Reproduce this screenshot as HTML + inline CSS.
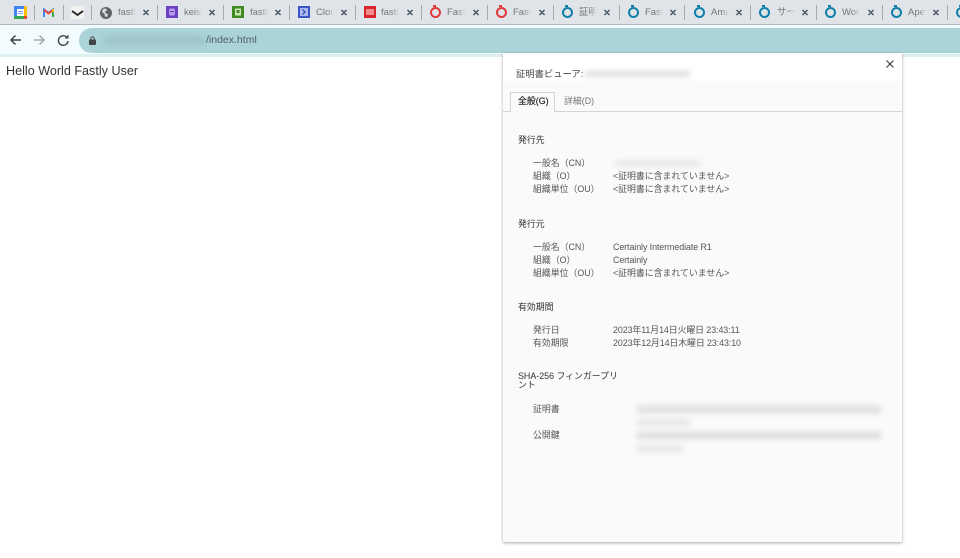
<!DOCTYPE html>
<html lang="ja"><head><meta charset="utf-8"><title>Certificate</title>
<style>
*{box-sizing:border-box}
html,body{margin:0;padding:0;width:960px;height:558px;overflow:hidden;background:#fff}
body{font-family:"Liberation Sans","Noto Sans CJK JP",sans-serif;color:#333}
#w{position:absolute;left:0;top:0;width:960px;height:558px;overflow:hidden;filter:blur(.3px)}
.a{position:absolute;white-space:nowrap}
#strip{left:0;top:0;width:960px;height:24px;background:#e0e4e9}
#stripline{left:0;top:24px;width:960px;height:1px;background:#b4b8bc}
#bar{left:0;top:25px;width:960px;height:29px;background:#f2fbfd}
#barline{left:0;top:54px;width:960px;height:3px;background:#deeff1}
#omni{left:79px;top:28px;width:900px;height:25px;border-radius:13px;background:#aad4d8}
.sep{position:absolute;top:5px;width:1px;height:15px;background:#a4a9ae}
.t{position:absolute;top:7px;font-size:9.5px;line-height:12px;color:#72777c;width:18px;overflow:hidden;white-space:nowrap;-webkit-mask-image:linear-gradient(90deg,#000 60%,transparent);mask-image:linear-gradient(90deg,#000 60%,transparent)}
.r{position:absolute;top:7px;width:11px;height:11px;border-radius:50%;border:2.7px solid #0e7fa8}
.r:before{content:"";position:absolute;left:1.300px;top:-4px;width:3px;height:2px;background:#0e7fa8}
.r.red{border-color:#e03a3a}
.r.red:before{background:#e03a3a}
.lbl{font-size:8.9px;line-height:13px;color:#555}
.h{font-size:8.9px;line-height:11px;color:#333}
.l{letter-spacing:-.08px}
.blur{position:absolute;filter:blur(3px);background:#c4c4c4}
#dlg{left:503px;top:53px;width:399px;height:489px;background:#fafafa;box-shadow:0 1px 3px rgba(0,0,0,.35)}
</style></head><body><div id="w">
<div class="a" id="strip"></div>
<div class="a" id="stripline"></div>
<div class="a" id="bar"></div>
<div class="a" id="barline"></div>
<div class="a" id="omni"></div>

<span class="sep" style="left:34px"></span><span class="sep" style="left:63px"></span><span class="sep" style="left:91px"></span><span class="sep" style="left:157px"></span><span class="sep" style="left:223px"></span><span class="sep" style="left:289px"></span><span class="sep" style="left:355px"></span><span class="sep" style="left:421px"></span><span class="sep" style="left:487px"></span><span class="sep" style="left:553px"></span><span class="sep" style="left:619px"></span><span class="sep" style="left:684px"></span><span class="sep" style="left:750px"></span><span class="sep" style="left:816px"></span><span class="sep" style="left:882px"></span><span class="sep" style="left:947px"></span>

<!-- pinned favicons -->
<svg class="a" style="left:14px;top:6px" width="13" height="13" viewBox="0 0 13 13"><rect width="13" height="13" fill="#4285f4"/><rect x="10" width="3" height="10" fill="#fbbc04"/><rect y="10" width="10" height="3" fill="#34a853"/><rect x="10" y="10" width="3" height="3" fill="#ea4335"/><rect x="3" y="3" width="7" height="7" fill="#fff"/><rect x="4" y="5" width="5" height="1" fill="#7aa7ee"/><rect x="4" y="7" width="5" height="1" fill="#7aa7ee"/></svg>
<svg class="a" style="left:43px;top:8px" width="11" height="9" viewBox="0 0 11 9"><path d="M1 9V1.500L5.500 5 10 1.500V9" fill="none" stroke="#4285f4" stroke-width="2"/><path d="M1 2 5.500 5.400 10 2" fill="none" stroke="#ea4335" stroke-width="2"/><path d="M10 1V4" stroke="#fbbc04" stroke-width="2"/><path d="M10 4V9" stroke="#34a853" stroke-width="2"/></svg>
<svg class="a" style="left:71px;top:6px" width="13" height="13" viewBox="0 0 13 13"><rect width="13" height="13" fill="#f1f1f0"/><path d="M1 5 6.500 9 12 5" fill="none" stroke="#222" stroke-width="1.800"/></svg>
<!-- tab icons -->
<svg class="a" style="left:100px;top:7px" width="12" height="12" viewBox="0 0 12 12"><circle cx="6" cy="6" r="6" fill="#5f6368"/><path d="M3 2 6 1.500 7 3 5 5 6 6.500 8 7 7 10 5 9.500 4.500 7 2 5Z" fill="#d8dbdf"/></svg>
<svg class="a" style="left:166px;top:6px" width="12" height="12" viewBox="0 0 12 12"><rect width="12" height="12" fill="#6b3fc4"/><rect x="3" y="2.500" width="6" height="7" rx="1.500" fill="#b59bea"/><rect x="4" y="5" width="4" height="1" fill="#6b3fc4"/></svg>
<svg class="a" style="left:232px;top:6px" width="12" height="12" viewBox="0 0 12 12"><rect width="12" height="12" fill="#3f8a1f"/><rect x="3" y="2.500" width="6" height="7" fill="#cfe8b8"/><rect x="4.500" y="4" width="3" height="3" fill="#3f8a1f"/></svg>
<svg class="a" style="left:298px;top:6px" width="12" height="12" viewBox="0 0 12 12"><rect width="12" height="12" fill="#3a53c9"/><rect x="2" y="2" width="8" height="8" fill="#a9b8ee"/><path d="M4.500 3.500 7 6 4.500 8.500" fill="none" stroke="#2b3ea5" stroke-width="1.200"/></svg>
<svg class="a" style="left:364px;top:6px" width="12" height="12" viewBox="0 0 12 12"><rect width="12" height="12" fill="#d9252c"/><rect x="2" y="3" width="8" height="6" fill="#f08b8e"/></svg>
<span class="r red" style="left:430px"></span><span class="r red" style="left:496px"></span>
<span class="r" style="left:562px"></span><span class="r" style="left:628px"></span><span class="r" style="left:694px"></span><span class="r" style="left:759px"></span><span class="r" style="left:825px"></span><span class="r" style="left:891px"></span><span class="r" style="left:956px"></span>

<span class="t" style="left:118px">fastly</span><span class="t" style="left:184px">keisuke</span><span class="t" style="left:250px">fastly</span><span class="t" style="left:316px">Cloud</span><span class="t" style="left:381px">fastly</span><span class="t" style="left:447px">Fastly</span><span class="t" style="left:513px">Fastly</span><span class="t" style="left:579px">証明書</span><span class="t" style="left:645px">Fastly</span><span class="t" style="left:711px">Amazon</span><span class="t" style="left:777px">サーバー</span><span class="t" style="left:842px">Works</span><span class="t" style="left:908px">Apex</span>

<svg class="a" style="left:0;top:0" width="960" height="25" viewBox="0 0 960 25" fill="none" stroke="#3c4a5a" stroke-width="1.300"><path d="M143.500 10l5 5m0-5l-5 5M209.500 10l5 5m0-5l-5 5M275.500 10l5 5m0-5l-5 5M341.500 10l5 5m0-5l-5 5M407.500 10l5 5m0-5l-5 5M473.500 10l5 5m0-5l-5 5M539.500 10l5 5m0-5l-5 5M604.500 10l5 5m0-5l-5 5M670.500 10l5 5m0-5l-5 5M736.500 10l5 5m0-5l-5 5M802.500 10l5 5m0-5l-5 5M868.500 10l5 5m0-5l-5 5M933.500 10l5 5m0-5l-5 5"/></svg>

<!-- toolbar icons -->
<svg class="a" style="left:9px;top:33px" width="62" height="14" viewBox="0 0 62 14" fill="none"><path d="M12 7H2M6.500 2.500 2 7l4.500 4.500" stroke="#444" stroke-width="1.500"/><path d="M35 7H25M30.500 2.500 35 7 30.500 11.500" stroke="#a2a6a8" stroke-width="1.500"/><path d="M57.500 4A4.800 4.800 0 1 0 59 8" stroke="#444" stroke-width="1.400"/><path d="M59.500 1.500V5.500H55.500Z" fill="#444"/></svg>
<svg class="a" style="left:89px;top:36px" width="7" height="9" viewBox="0 0 7 9"><rect y="3.500" width="7" height="5.500" rx="1" fill="#444"/><path d="M1.800 4V2.500a1.700 1.700 0 0 1 3.400 0V4" fill="none" stroke="#444"/></svg>
<div class="blur" style="left:104px;top:37px;width:101px;height:7px;background:#9cc2c6"></div>
<div class="a" style="left:206px;top:33px;font-size:10.500px;line-height:14px;color:#4a5f63">/index.html</div>

<div class="a" style="left:6px;top:63px;font-size:12.600px;line-height:16px;color:#333">Hello World Fastly User</div>

<!-- dialog -->
<div class="a" id="dlg"></div>
<div class="a" style="left:503px;top:53px;width:399px;height:28px;background:#fff"></div>
<svg class="a" style="left:886px;top:60px" width="8" height="8" viewBox="0 0 8 8"><path d="M.500.500l7 7m0-7l-7 7" stroke="#444" stroke-width="1.200"/></svg>
<div class="a" style="left:516px;top:67px;font-size:9.300px;line-height:14px;color:#444">証明書ビューア:</div>
<div class="blur" style="left:585px;top:71px;width:105px;height:6px;background:#dddddd"></div>

<div class="a" style="left:503px;top:111px;width:399px;height:1px;background:#d4d4d4"></div>
<div class="a" style="left:510px;top:92px;width:45px;height:20px;background:#fafafa;border:1px solid #d4d4d4;border-bottom:0"></div>
<div class="a" style="left:518px;top:95px;font-size:8.900px;line-height:12px;color:#222;-webkit-text-stroke:.15px #222">全般(G)</div>
<div class="a" style="left:564px;top:95px;font-size:8.900px;line-height:12px;color:#777">詳細(D)</div>

<div class="a h" style="left:518px;top:135px">発行先</div>
<div class="a lbl" style="left:533px;top:157px">一般名（CN）</div>
<div class="blur" style="left:615px;top:161px;width:85px;height:5px;background:#e2e2e2"></div>
<div class="a lbl" style="left:533px;top:170px">組織（O）</div>
<div class="a lbl" style="left:613px;top:170px">&lt;証明書に含まれていません&gt;</div>
<div class="a lbl" style="left:533px;top:183px">組織単位（OU）</div>
<div class="a lbl" style="left:613px;top:183px">&lt;証明書に含まれていません&gt;</div>

<div class="a h" style="left:518px;top:219px">発行元</div>
<div class="a lbl" style="left:533px;top:241px">一般名（CN）</div>
<div class="a lbl l" style="left:613px;top:241px">Certainly Intermediate R1</div>
<div class="a lbl" style="left:533px;top:254px">組織（O）</div>
<div class="a lbl l" style="left:613px;top:254px">Certainly</div>
<div class="a lbl" style="left:533px;top:267px">組織単位（OU）</div>
<div class="a lbl" style="left:613px;top:267px">&lt;証明書に含まれていません&gt;</div>

<div class="a h" style="left:518px;top:302px">有効期間</div>
<div class="a lbl" style="left:533px;top:324px">発行日</div>
<div class="a lbl l" style="left:613px;top:324px">2023年11月14日火曜日 23:43:11</div>
<div class="a lbl" style="left:533px;top:337px">有効期限</div>
<div class="a lbl l" style="left:613px;top:337px">2023年12月14日木曜日 23:43:10</div>

<div class="a h" style="left:518px;top:372px;line-height:9px;width:102px;white-space:normal">SHA-256 フィンガープリント</div>
<div class="a lbl" style="left:533px;top:403px">証明書</div>
<div class="blur" style="left:637px;top:406px;width:244px;height:7px;background:#dcdcdc"></div>
<div class="blur" style="left:637px;top:420px;width:53px;height:5px;background:#e0e0e0"></div>
<div class="a lbl" style="left:533px;top:429px">公開鍵</div>
<div class="blur" style="left:637px;top:432px;width:244px;height:7px;background:#dcdcdc"></div>
<div class="blur" style="left:637px;top:446px;width:46px;height:5px;background:#e0e0e0"></div>
</div></body></html>
